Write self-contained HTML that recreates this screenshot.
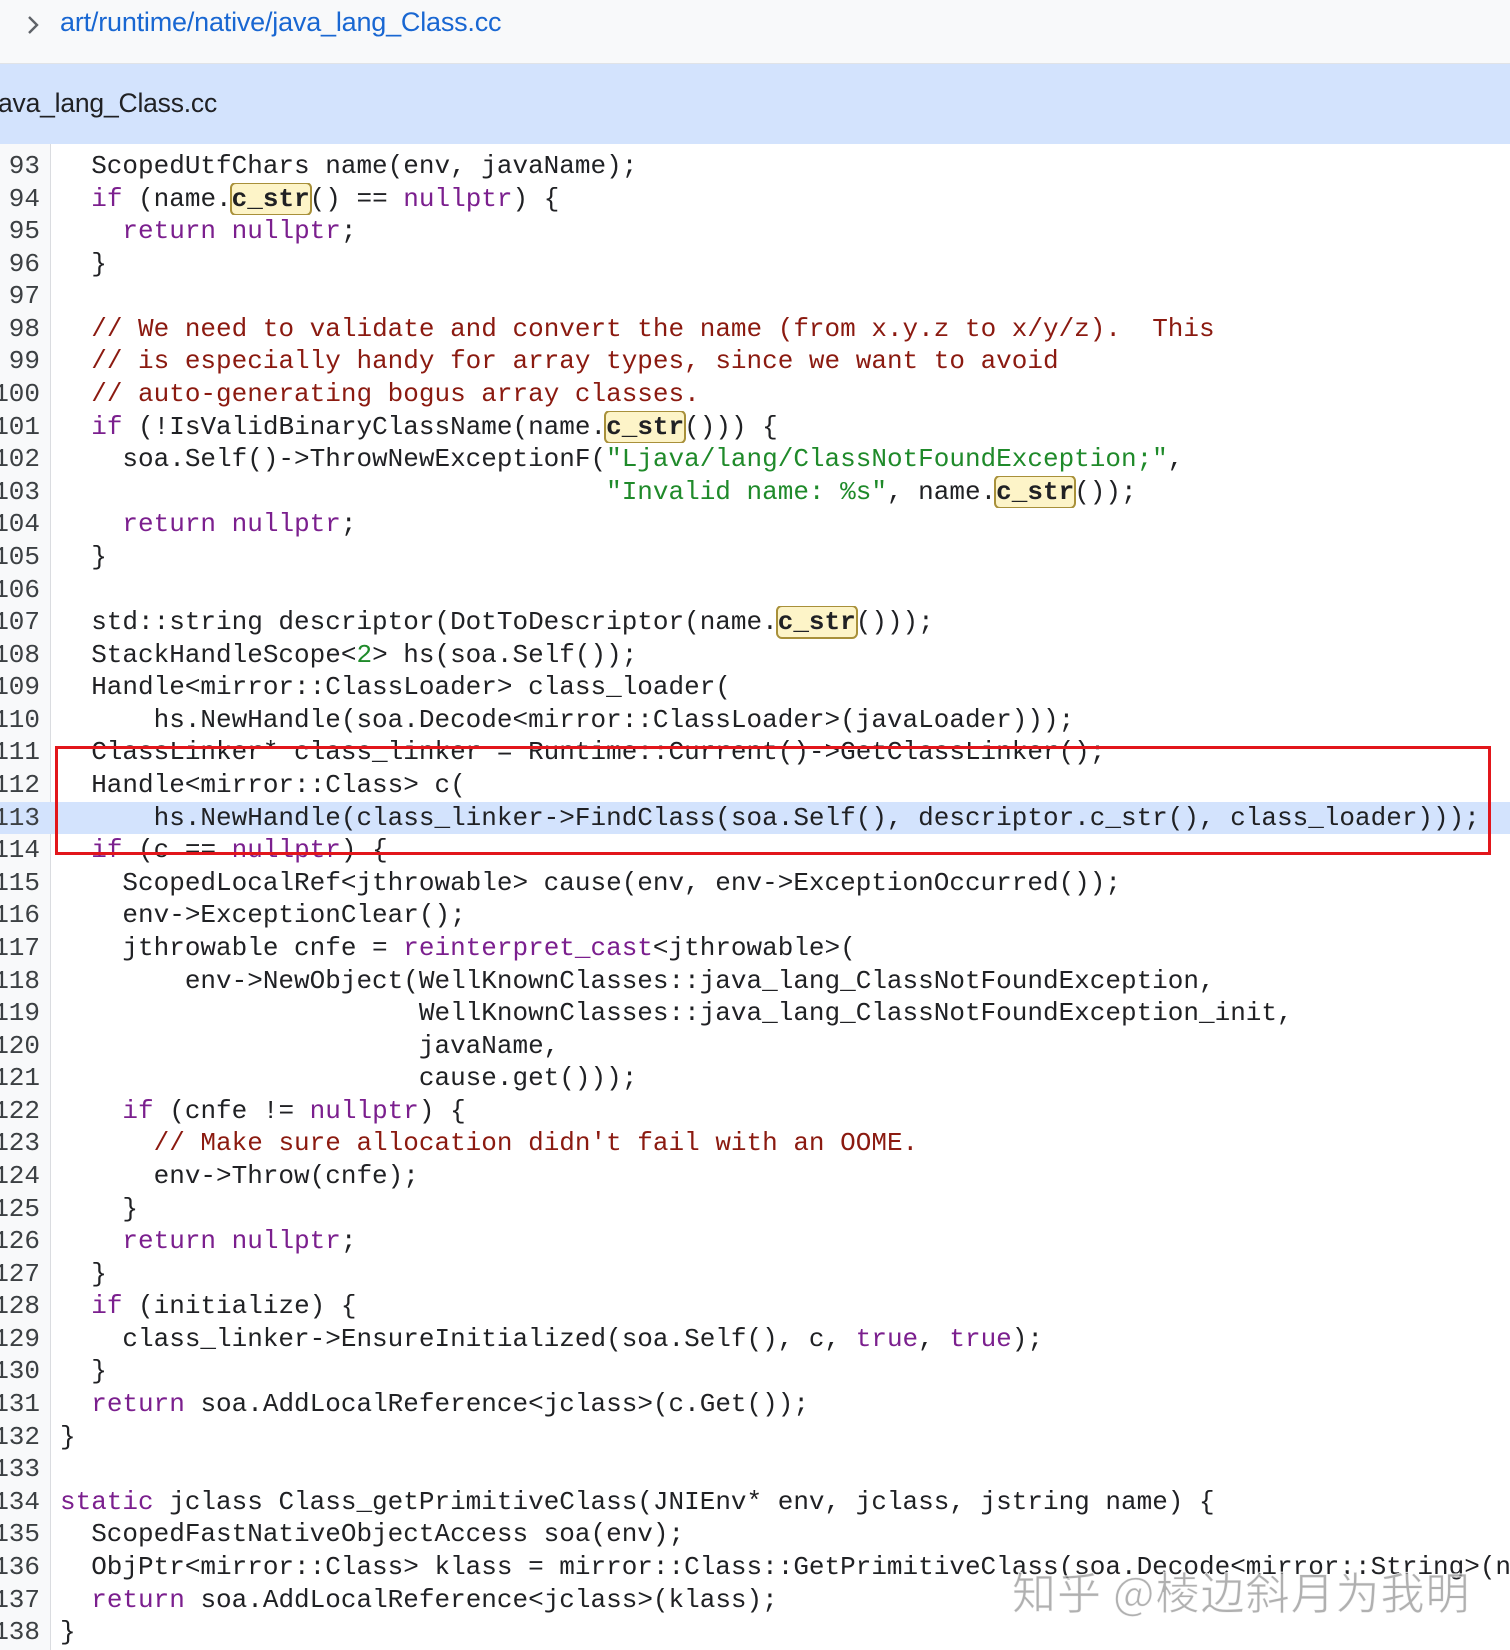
<!DOCTYPE html>
<html><head><meta charset="utf-8">
<style>
html,body{margin:0;padding:0;width:1510px;height:1650px;overflow:hidden;background:#fff;}
.top{position:absolute;left:0;top:0;width:1510px;height:63px;background:#f8f9fa;border-bottom:1px solid #e0e3e7;}
.crumb{position:absolute;left:60px;top:7px;font:27px "Liberation Sans",sans-serif;color:#1967d2;letter-spacing:-0.2px;}
.chev{position:absolute;left:24px;top:14px;}
.hdr{position:absolute;left:0;top:64px;width:1510px;height:80px;background:#d3e3fd;}
.hdr span{position:absolute;left:-2px;top:24px;font:26.5px "Liberation Sans",sans-serif;color:#202124;letter-spacing:-0.2px;}
.gut{position:absolute;left:0;top:144px;width:50px;height:1506px;background:#f8f9fa;border-right:1px solid #dadce0;}
.ln{position:absolute;left:0;width:1510px;height:32.58px;overflow:hidden;font:26px/32.58px "Liberation Mono",monospace;white-space:pre;color:#202124;}
.ln .n{position:absolute;right:1470px;color:#3c4043;text-align:right;}
.ln .t{position:absolute;left:60px;}
.k{color:#7b1f8e;}
.c{color:#8b1a10;}
.s{color:#1f8a2a;}
.h{font-weight:bold;background:#fdf4c8;border:2px solid #a8903a;border-radius:6px;margin:0 -2px;}
.hl{background:#d3e3fd;}
.red{position:absolute;left:55px;top:746px;width:1430px;height:103px;border:3px solid #e2161b;}
.wm{position:absolute;left:1012px;top:1558px;font:44px "Noto Sans CJK SC",sans-serif;color:rgba(150,150,150,0.75);letter-spacing:1px;-webkit-text-stroke:1px rgba(255,255,255,0.8);}
</style></head><body>
<div class="top">
<svg class="chev" width="18" height="22" viewBox="0 0 18 22"><path d="M5 3 L13 11 L5 19" fill="none" stroke="#5f6368" stroke-width="2.4"/></svg>
<div class="crumb">art/runtime/native/java_lang_Class.cc</div>
</div>
<div class="hdr"><span>ava_lang_Class.cc</span></div>
<div class="gut"></div>
<div class="ln" style="top:150px"><span class="n">93</span><span class="t">  ScopedUtfChars name(env, javaName);</span></div>
<div class="ln" style="top:182.58px"><span class="n">94</span><span class="t">  <span class="k">if</span> (name.<span class="h">c_str</span>() == <span class="k">nullptr</span>) {</span></div>
<div class="ln" style="top:215.16px"><span class="n">95</span><span class="t">    <span class="k">return</span> <span class="k">nullptr</span>;</span></div>
<div class="ln" style="top:247.74px"><span class="n">96</span><span class="t">  }</span></div>
<div class="ln" style="top:280.32px"><span class="n">97</span><span class="t"></span></div>
<div class="ln" style="top:312.9px"><span class="n">98</span><span class="t">  <span class="c">// We need to validate and convert the name (from x.y.z to x/y/z).  This</span></span></div>
<div class="ln" style="top:345.48px"><span class="n">99</span><span class="t">  <span class="c">// is especially handy for array types, since we want to avoid</span></span></div>
<div class="ln" style="top:378.06px"><span class="n">100</span><span class="t">  <span class="c">// auto-generating bogus array classes.</span></span></div>
<div class="ln" style="top:410.64px"><span class="n">101</span><span class="t">  <span class="k">if</span> (!IsValidBinaryClassName(name.<span class="h">c_str</span>())) {</span></div>
<div class="ln" style="top:443.22px"><span class="n">102</span><span class="t">    soa.Self()-&gt;ThrowNewExceptionF(<span class="s">"Ljava/lang/ClassNotFoundException;"</span>,</span></div>
<div class="ln" style="top:475.8px"><span class="n">103</span><span class="t">                                   <span class="s">"Invalid name: %s"</span>, name.<span class="h">c_str</span>());</span></div>
<div class="ln" style="top:508.38px"><span class="n">104</span><span class="t">    <span class="k">return</span> <span class="k">nullptr</span>;</span></div>
<div class="ln" style="top:540.96px"><span class="n">105</span><span class="t">  }</span></div>
<div class="ln" style="top:573.54px"><span class="n">106</span><span class="t"></span></div>
<div class="ln" style="top:606.12px"><span class="n">107</span><span class="t">  std::string descriptor(DotToDescriptor(name.<span class="h">c_str</span>()));</span></div>
<div class="ln" style="top:638.7px"><span class="n">108</span><span class="t">  StackHandleScope&lt;<span class="s">2</span>&gt; hs(soa.Self());</span></div>
<div class="ln" style="top:671.28px"><span class="n">109</span><span class="t">  Handle&lt;mirror::ClassLoader&gt; class_loader(</span></div>
<div class="ln" style="top:703.86px"><span class="n">110</span><span class="t">      hs.NewHandle(soa.Decode&lt;mirror::ClassLoader&gt;(javaLoader)));</span></div>
<div class="ln" style="top:736.44px"><span class="n">111</span><span class="t">  ClassLinker* class_linker = Runtime::Current()-&gt;GetClassLinker();</span></div>
<div class="ln" style="top:769.02px"><span class="n">112</span><span class="t">  Handle&lt;mirror::Class&gt; c(</span></div>
<div class="ln hl" style="top:801.6px"><span class="n">113</span><span class="t">      hs.NewHandle(class_linker-&gt;FindClass(soa.Self(), descriptor.c_str(), class_loader)));</span></div>
<div class="ln" style="top:834.18px"><span class="n">114</span><span class="t">  <span class="k">if</span> (c == <span class="k">nullptr</span>) {</span></div>
<div class="ln" style="top:866.76px"><span class="n">115</span><span class="t">    ScopedLocalRef&lt;jthrowable&gt; cause(env, env-&gt;ExceptionOccurred());</span></div>
<div class="ln" style="top:899.34px"><span class="n">116</span><span class="t">    env-&gt;ExceptionClear();</span></div>
<div class="ln" style="top:931.92px"><span class="n">117</span><span class="t">    jthrowable cnfe = <span class="k">reinterpret_cast</span>&lt;jthrowable&gt;(</span></div>
<div class="ln" style="top:964.5px"><span class="n">118</span><span class="t">        env-&gt;NewObject(WellKnownClasses::java_lang_ClassNotFoundException,</span></div>
<div class="ln" style="top:997.08px"><span class="n">119</span><span class="t">                       WellKnownClasses::java_lang_ClassNotFoundException_init,</span></div>
<div class="ln" style="top:1029.66px"><span class="n">120</span><span class="t">                       javaName,</span></div>
<div class="ln" style="top:1062.24px"><span class="n">121</span><span class="t">                       cause.get()));</span></div>
<div class="ln" style="top:1094.82px"><span class="n">122</span><span class="t">    <span class="k">if</span> (cnfe != <span class="k">nullptr</span>) {</span></div>
<div class="ln" style="top:1127.4px"><span class="n">123</span><span class="t">      <span class="c">// Make sure allocation didn't fail with an OOME.</span></span></div>
<div class="ln" style="top:1159.98px"><span class="n">124</span><span class="t">      env-&gt;Throw(cnfe);</span></div>
<div class="ln" style="top:1192.56px"><span class="n">125</span><span class="t">    }</span></div>
<div class="ln" style="top:1225.14px"><span class="n">126</span><span class="t">    <span class="k">return</span> <span class="k">nullptr</span>;</span></div>
<div class="ln" style="top:1257.72px"><span class="n">127</span><span class="t">  }</span></div>
<div class="ln" style="top:1290.3px"><span class="n">128</span><span class="t">  <span class="k">if</span> (initialize) {</span></div>
<div class="ln" style="top:1322.88px"><span class="n">129</span><span class="t">    class_linker-&gt;EnsureInitialized(soa.Self(), c, <span class="k">true</span>, <span class="k">true</span>);</span></div>
<div class="ln" style="top:1355.46px"><span class="n">130</span><span class="t">  }</span></div>
<div class="ln" style="top:1388.04px"><span class="n">131</span><span class="t">  <span class="k">return</span> soa.AddLocalReference&lt;jclass&gt;(c.Get());</span></div>
<div class="ln" style="top:1420.62px"><span class="n">132</span><span class="t">}</span></div>
<div class="ln" style="top:1453.2px"><span class="n">133</span><span class="t"></span></div>
<div class="ln" style="top:1485.78px"><span class="n">134</span><span class="t"><span class="k">static</span> jclass Class_getPrimitiveClass(JNIEnv* env, jclass, jstring name) {</span></div>
<div class="ln" style="top:1518.36px"><span class="n">135</span><span class="t">  ScopedFastNativeObjectAccess soa(env);</span></div>
<div class="ln" style="top:1550.94px"><span class="n">136</span><span class="t">  ObjPtr&lt;mirror::Class&gt; klass = mirror::Class::GetPrimitiveClass(soa.Decode&lt;mirror::String&gt;(name));</span></div>
<div class="ln" style="top:1583.52px"><span class="n">137</span><span class="t">  <span class="k">return</span> soa.AddLocalReference&lt;jclass&gt;(klass);</span></div>
<div class="ln" style="top:1616.1px"><span class="n">138</span><span class="t">}</span></div>
<div class="red"></div>
<div class="wm">知乎 @棱边斜月为我明</div>
</body></html>
